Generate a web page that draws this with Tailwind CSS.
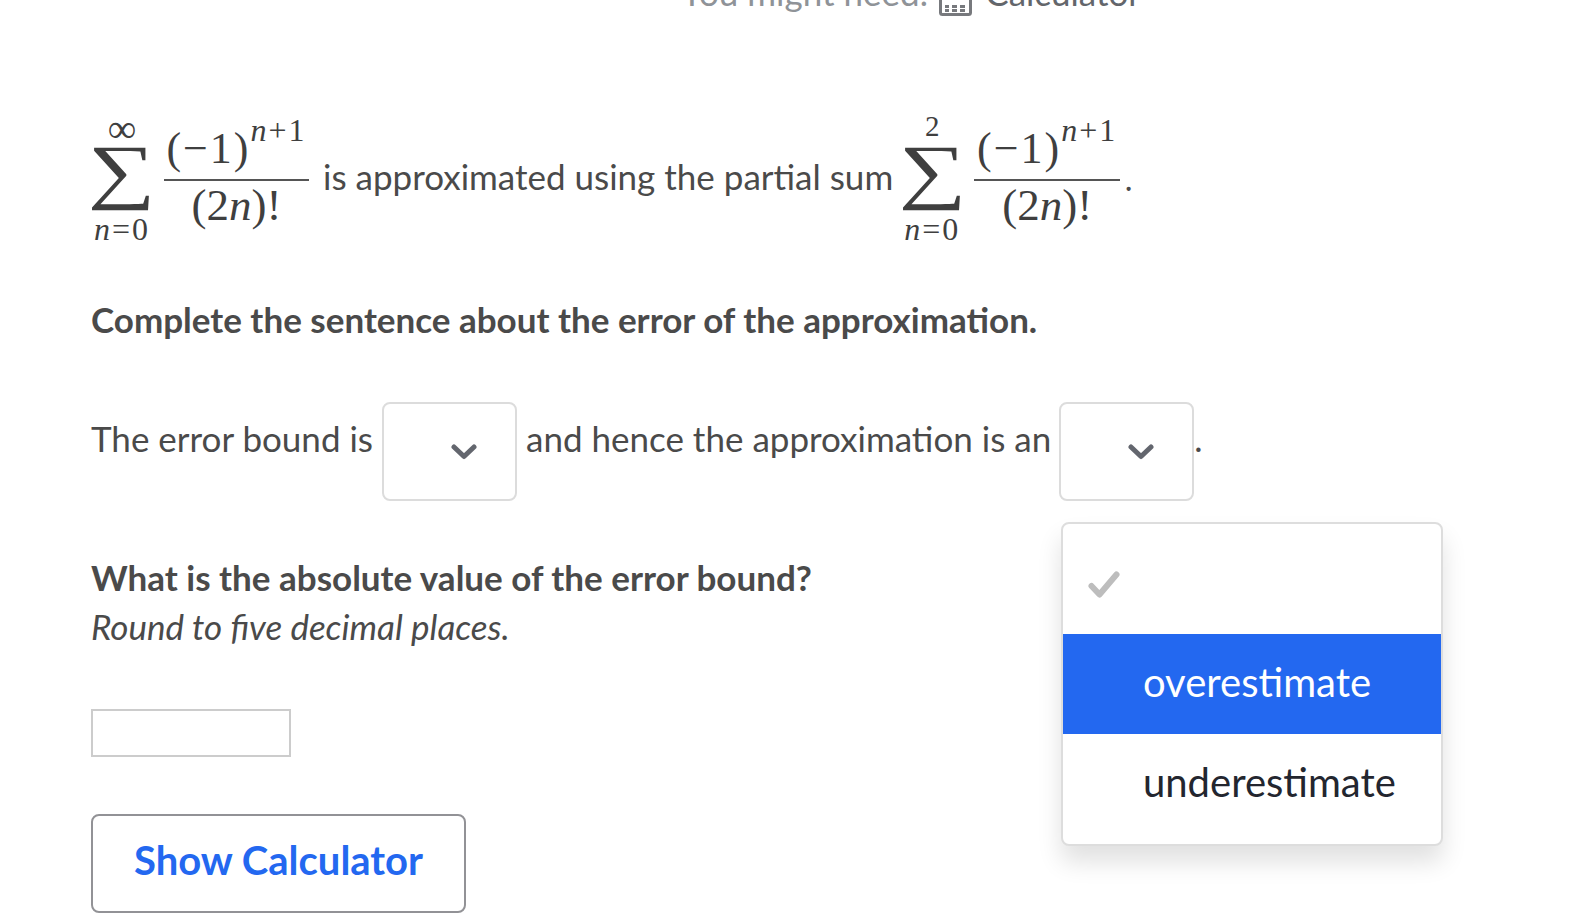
<!DOCTYPE html>
<html lang="en">
<head>
  <meta charset="UTF-8" />
  <title>Error of the approximation</title>
  <script src="https://cdn.jsdelivr.net/npm/@tailwindcss/browser@4"></script>
</head>
<body class="bg-white overflow-hidden font-['Lato',sans-serif] text-[#4a4a4a]">
  <div class="relative w-[1580px] h-[915px] overflow-hidden">
    <!-- tools line, cut off by the top of the window -->
    <div class="flex items-center justify-center h-[36px] mt-[-26px] ml-[242px] text-[35px] text-[#8f9398]">
      <span class="whitespace-nowrap">You might need:</span>
      <svg class="w-[33px] h-[34px] ml-[11px] mr-[13px] mt-[14px] shrink-0" viewBox="0 0 33 34" fill="none">
        <rect x="1.5" y="-8" width="30" height="40.5" rx="2" stroke="#77797d" stroke-width="3"/>
        <rect x="6" y="23" width="4" height="3" fill="#77797d"/><rect x="13" y="23" width="5" height="3" fill="#77797d"/><rect x="21" y="23" width="5" height="3" fill="#77797d"/>
        <rect x="6" y="27" width="4" height="3" fill="#77797d"/><rect x="13" y="27" width="5" height="3" fill="#77797d"/><rect x="21" y="27" width="5" height="3" fill="#77797d"/>
      </svg>
      <span class="text-[#63666b]">Calculator</span>
    </div>

    <div class="pl-[91px]">
      <!-- series -->
      <div class="flex items-center h-[130px] mt-[101px] text-[35px]">
        <div class="flex flex-col items-center w-[58px] ml-[2px] mt-[12px] font-['Liberation_Serif',serif] text-[#3f3f3f]">
          <span class="text-[40px] leading-[26px] h-[26px] mt-[-1px]">∞</span>
          <span class="text-[72px] leading-[64px] h-[64px] mt-[-3px] scale-x-[1.32]">∑</span>
          <span class="text-[32px] leading-[36px] h-[36px] mt-[8px] tracking-[2px] whitespace-nowrap"><i>n</i>=0</span>
        </div>
        <div class="flex flex-col items-center w-[145px] ml-[13px] mt-[2px] font-['Liberation_Serif',serif] text-[#3f3f3f]">
          <span class="h-[60px] leading-[60px] text-[44px] tracking-[2px] whitespace-nowrap">(−1)<sup class="text-[32px] top-[-22px] tracking-[2px]"><i>n</i>+1</sup></span>
          <span class="block w-full h-[2px] bg-[#555]"></span>
          <span class="h-[54px] leading-[48px] text-[45px] whitespace-nowrap">(2<i>n</i>)!</span>
        </div>
        <span class="ml-[14px] mr-[10px] whitespace-nowrap">is approximated using the partial sum</span>
        <div class="flex flex-col items-center w-[58px] mt-[12px] font-['Liberation_Serif',serif] text-[#3f3f3f]">
          <span class="text-[29px] leading-[26px] h-[26px] mt-[-4px]">2</span>
          <span class="text-[72px] leading-[64px] h-[64px] scale-x-[1.32]">∑</span>
          <span class="text-[32px] leading-[36px] h-[36px] mt-[8px] tracking-[2px] whitespace-nowrap"><i>n</i>=0</span>
        </div>
        <div class="flex flex-col items-center w-[146px] ml-[13px] mt-[2px] font-['Liberation_Serif',serif] text-[#3f3f3f]">
          <span class="h-[60px] leading-[60px] text-[44px] tracking-[2px] whitespace-nowrap">(−1)<sup class="text-[32px] top-[-22px] tracking-[2px]"><i>n</i>+1</sup></span>
          <span class="block w-full h-[2px] bg-[#555]"></span>
          <span class="h-[54px] leading-[48px] text-[45px] whitespace-nowrap">(2<i>n</i>)!</span>
        </div>
        <span class="ml-[4px] mt-[8px] font-['Liberation_Serif',serif]">.</span>
      </div>

      <h2 class="mt-[55px] text-[35px] leading-[46px] font-bold">Complete the sentence about the error of the approximation.</h2>

      <!-- sentence with two dropdowns -->
      <div class="flex items-start mt-[60px] text-[35px] leading-[46px] h-[99px]">
        <span class="mt-[13px]">The error bound is</span>
        <div class="flex items-center justify-end w-[135px] h-[99px] mx-[9px] pr-[38px] border-2 border-[#dcdcdc] rounded-[8px]">
          <svg class="w-[26px] h-[16px]" viewBox="0 0 26 16" fill="none"><path d="M3 3l10 9.500L23 3" stroke="#63666e" stroke-width="5" stroke-linecap="round" stroke-linejoin="round"/></svg>
        </div>
        <span class="mt-[13px]">and hence the approximation is an</span>
        <div class="flex items-center justify-end w-[135px] h-[99px] ml-[8px] pr-[38px] border-2 border-[#dcdcdc] rounded-[8px]">
          <svg class="w-[26px] h-[16px]" viewBox="0 0 26 16" fill="none"><path d="M3 3l10 9.500L23 3" stroke="#63666e" stroke-width="5" stroke-linecap="round" stroke-linejoin="round"/></svg>
        </div>
        <span class="mt-[13px]">.</span>
      </div>

      <h2 class="mt-[53px] text-[35px] leading-[46px] font-bold">What is the absolute value of the error bound?</h2>
      <p class="mt-[3px] text-[35px] leading-[46px] italic">Round to five decimal places.</p>

      <div class="w-[200px] h-[48px] mt-[60px] border-2 border-[#cccccc]"></div>

      <button class="block w-[375px] h-[99px] mt-[57px] pb-[8px] border-2 border-[#929296] rounded-[8px] text-[40px] font-bold text-[#2368f0]">Show Calculator</button>
    </div>

    <!-- open dropdown menu -->
    <div class="absolute left-[1061px] top-[522px] w-[382px] h-[324px] bg-white border-2 border-[#dddddd] rounded-[8px] shadow-[0_16px_24px_rgba(0,0,0,0.12)] text-[40px]">
      <div class="flex items-center h-[110px] pl-[25px] pt-[11px]">
        <svg class="w-[32px] h-[27px]" viewBox="0 0 32 27" fill="none"><path d="M3.500 15l8 8.500L28.500 3.500" stroke="#bdbdbd" stroke-width="6" stroke-linecap="round" stroke-linejoin="round"/></svg>
      </div>
      <div class="flex items-center h-[100px] pl-[80px] pb-[4px] bg-[#2368f0] text-white">overestimate</div>
      <div class="flex items-center h-[100px] pl-[80px] pb-[4px] text-[#23262f]">underestimate</div>
    </div>
  </div>
</body>
</html>
